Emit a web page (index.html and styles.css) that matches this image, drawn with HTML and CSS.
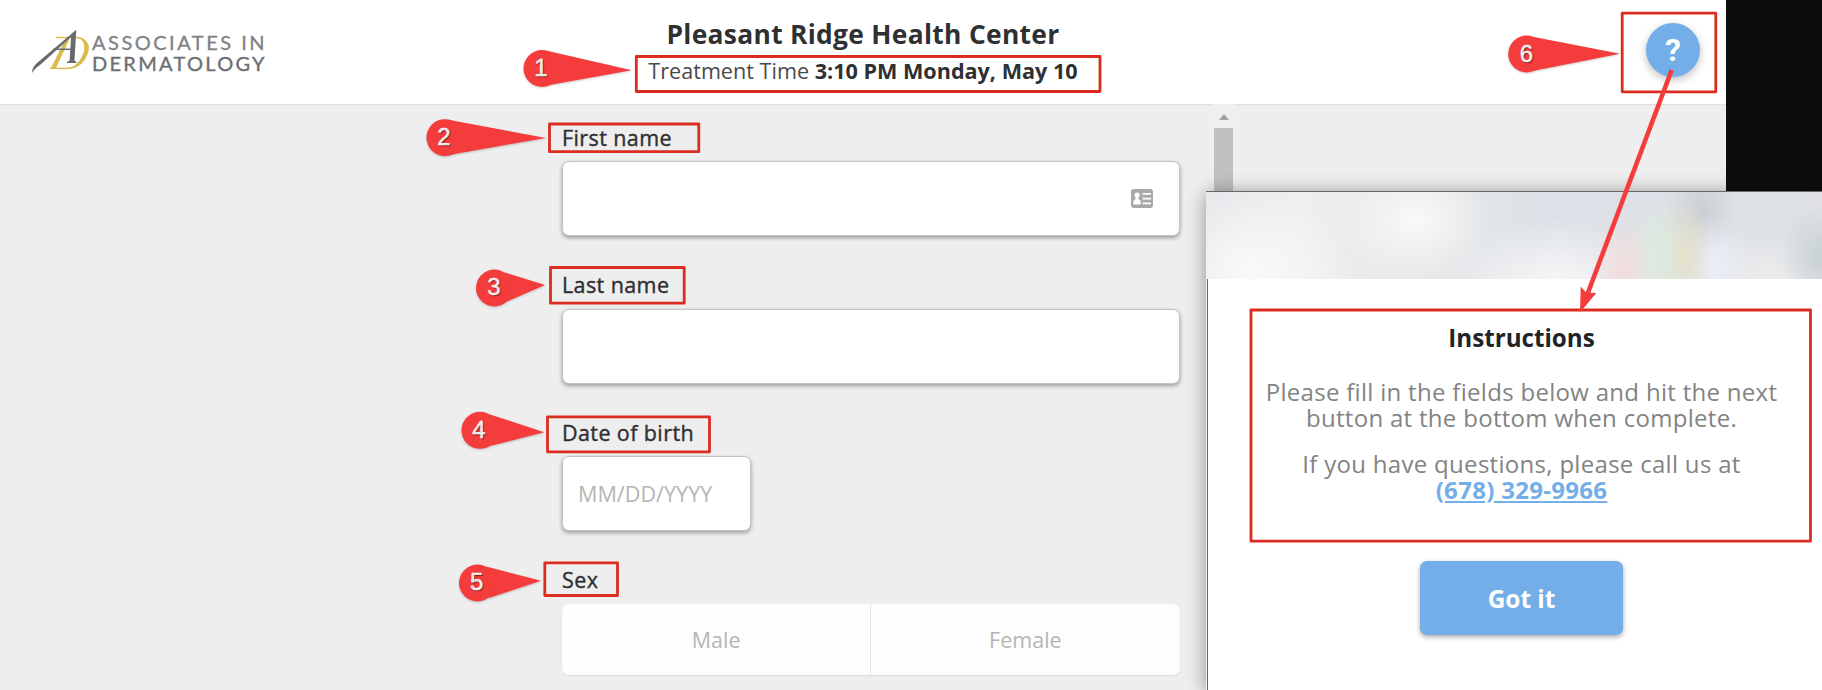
FILE: index.html
```html
<!DOCTYPE html>
<html lang="en">
<head>
    <meta charset="UTF-8">
    <meta name="viewport" content="width=device-width, initial-scale=1.0">
    <title>Pleasant Ridge Health Center - Check In</title>
    <link rel="stylesheet" href="styles.css">
</head>
<body>
    <div class="page">
        <header class="header">
            <div class="logo">
                <svg class="logo-mark" width="60" height="46" viewBox="0 0 60 46">
                    <path d="M25 8.5 H44 C54 8.5 58 15 56 23 C53 34 45 39.5 34 39.5 L19 39.3" fill="none" stroke="#d9bb4e" stroke-width="1.6"/>
                    <path d="M47 8 C58 10 60 19 56 26 C53 34 47 38 39 40 C47 35 51 29 53 22 C54 15 52 11 47 8 Z" fill="#d9bb4e"/>
                    <path d="M35 9 L39 9 L25 39 L20 39 Z" fill="#d9bb4e"/>
                    <path d="M1.3 44 C1 39 3 37 6 34 L44.5 1.5 L44.5 4 L9 36 C5 39 3.5 40 1.3 44 Z" fill="#6a6b70"/>
                    <path d="M45.3 1 L43.5 31 Q43.3 32.5 45.5 32.8 V34 H36 V32.8 Q38.5 32.5 38.6 31 L40.3 5 Z" fill="#6a6b70"/>
                    <path d="M22 20.3 H40" stroke="#6a6b70" stroke-width="1.5"/>
                </svg>
                <div class="logo-text">
                    <span class="logo-top">ASSOCIATES IN</span>
                    <span class="logo-bottom">DERMATOLOGY</span>
                </div>
            </div>
            <div class="heading">
                <h1>Pleasant Ridge Health Center</h1>
                <p>Treatment Time <b>3:10 PM Monday, May 10</b></p>
            </div>
            <button class="help-btn">?</button>
        </header>
        <main class="content">
            <form class="form">
                <div class="field">
                    <label for="first">First name</label>
                    <div class="input-box">
                        <input id="first" type="text">
                        <svg width="22" height="19" viewBox="0 0 22 19">
                            <rect width="22" height="19" rx="3" fill="#a9a9a9"/>
                            <circle cx="6" cy="6.1" r="2.6" fill="#fff"/>
                            <path d="M2.3 15.5 V13 Q2.3 10.8 4.4 10.3 L4.8 8 H7.2 L7.6 10.3 Q9.7 10.8 9.7 13 V15.5 Z" fill="#fff"/>
                            <path d="M11.5 4.8 H20 M11.5 9.6 H20 M11.5 14.4 H20" stroke="#fff" stroke-width="1.8"/>
                        </svg>
                    </div>
                </div>
                <div class="field">
                    <label for="last">Last name</label>
                    <div class="input-box">
                        <input id="last" type="text">
                    </div>
                </div>
                <div class="field">
                    <label for="dob">Date of birth</label>
                    <div class="input-box small">
                        <input id="dob" type="text" placeholder="MM/DD/YYYY">
                    </div>
                </div>
                <div class="field">
                    <label>Sex</label>
                    <div class="toggle">
                        <button type="button">Male</button>
                        <button type="button">Female</button>
                    </div>
                </div>
            </form>
            <div class="scrollbar">
                <div class="scroll-up"></div>
                <div class="scroll-thumb"></div>
            </div>
        </main>
    </div>

    <div class="popup">
        <div class="popup-bar"></div>
        <div class="popup-body">
            <h2>Instructions</h2>
            <p>Please fill in the fields below and hit the next<br>button at the bottom when complete.</p>
            <p>If you have questions, please call us at<br><a href="tel:6783299966">(678) 329-9966</a></p>
            <button class="got-it">Got it</button>
        </div>
    </div>

    <!-- callout boxes, numbered pins and arrow -->
    <svg class="callouts" width="1822" height="690" viewBox="0 0 1822 690">
        <g class="boxes">
            <rect x="636.3" y="56.5" width="463.7" height="35"/>
            <rect x="549.5" y="124" width="149.3" height="27.7"/>
            <rect x="550.5" y="267.5" width="133.7" height="35.7"/>
            <rect x="547.5" y="416.8" width="162" height="35"/>
            <rect x="544.8" y="562.8" width="72.7" height="32.7"/>
            <rect x="1622.2" y="13.2" width="93.6" height="78.6"/>
            <rect x="1251" y="310" width="559.5" height="231.2"/>
        </g>
        <g class="pins">
            <circle cx="542" cy="68.5" r="18.5"/>
            <path d="M548 51 L631.7 70.3 L551 84.8 Z"/>
            <circle cx="445" cy="137.7" r="18.5"/>
            <path d="M452 120.6 L546 138 L452 154.4 Z"/>
            <circle cx="494.5" cy="288" r="18.5"/>
            <path d="M505 272.5 L545 285 L507 301.5 Z"/>
            <circle cx="480" cy="430.3" r="18.5"/>
            <path d="M490 414.5 L544.3 432.3 L490 446 Z"/>
            <circle cx="477.5" cy="583" r="18.5"/>
            <path d="M486 566.5 L541 580.7 L489 598 Z"/>
            <circle cx="1526.7" cy="54" r="18.5"/>
            <path d="M1534 37 L1620 53.7 L1534 70.8 Z"/>
        </g>
        <g class="pin-labels">
            <text x="541" y="76">1</text>
            <text x="444" y="144.7">2</text>
            <text x="494" y="295">3</text>
            <text x="479" y="438">4</text>
            <text x="476.7" y="590">5</text>
            <text x="1526.5" y="61.7">6</text>
        </g>
        <g class="arrow">
            <path d="M1671.7 70 L1587.5 294" fill="none" stroke="#f43c3c" stroke-width="4.6"/>
            <path d="M1580 312.5 L1580.7 286.5 L1586 292.5 L1596.3 293 Z" fill="#f43c3c"/>
        </g>
    </svg>
</body>
</html>
```

FILE: styles.css
```css
* {
    box-sizing: border-box;
}
body {
    margin: 0;
    height: 690px;
    overflow: hidden;
    background-color: #0d0d0d;
    font-family: "Open Sans", sans-serif;
    color: #2f3032;
}
h1, h2, p {
    margin: 0;
}
button, input {
    font-family: inherit;
    border: none;
    padding: 0;
}
.page {
    width: 1726px;
    height: 690px;
    background-color: #eeeeee;
}
.header {
    display: grid;
    grid-template-columns: 1fr auto 1fr;
    height: 104px;
    padding: 0 26px 0 31px;
    background-color: #fff;
    box-shadow: 0 1px 1px rgba(0, 0, 0, 0.06);
}
.logo {
    display: flex;
    padding-top: 29px;
}
.logo-text {
    display: flex;
    flex-direction: column;
    font-family: Lato, sans-serif;
    font-size: 20px;
    line-height: 20.5px;
    padding-top: 3px;
    margin-left: 1px;
    white-space: nowrap;
}
.logo-top {
    color: #808185;
    letter-spacing: 2.5px;
    -webkit-text-stroke: 0.3px #808185;
}
.logo-bottom {
    color: #6f7074;
    letter-spacing: 2.3px;
    -webkit-text-stroke: 0.4px #6f7074;
}
.heading {
    margin-right: 5px;
    text-align: center;
    white-space: nowrap;
}
.heading h1 {
    font-size: 26.4px;
    line-height: 34px;
    font-weight: 700;
    letter-spacing: 0.3px;
    padding-top: 17px;
}
.heading p {
    font-size: 21.6px;
    line-height: 30px;
    padding-top: 4.5px;
    color: #4a4a4a;
}
.heading b {
    color: #2f3032;
}
.help-btn {
    justify-self: end;
    width: 54px;
    height: 54px;
    margin-top: 23px;
    border-radius: 50%;
    background-color: #74aee8;
    color: #fff;
    font-family: Roboto, sans-serif;
    font-size: 32px;
    font-weight: 700;
    box-shadow: 0 3px 8px rgba(0, 0, 0, 0.25);
}
.content {
    display: flex;
    padding-left: 562px;
}
.form {
    width: 617.5px;
    padding-top: 19px;
}
.field {
    height: 147.4px;
}
.field label {
    display: block;
    height: 38.4px;
    font-size: 21.5px;
    line-height: 29px;
    letter-spacing: 0.4px;
    -webkit-text-stroke: 0.4px #2f3032;
}
.input-box {
    display: flex;
    align-items: center;
    height: 75px;
    padding: 0 26px 0 15px;
    border: 1px solid #c4c4c4;
    border-radius: 7px;
    background-color: #fff;
    box-shadow: 0 2px 4px rgba(0, 0, 0, 0.35);
}
.input-box.small {
    width: 189px;
    padding: 0 10px 0 15px;
}
.input-box input {
    flex: 1;
    min-width: 0;
    background: none;
    font-size: 21.6px;
}
.input-box input::placeholder {
    color: #b5b5b5;
}
.toggle {
    display: flex;
    height: 71px;
    border-radius: 7px;
    background-color: #fdfdfd;
    box-shadow: 0 1px 2px rgba(0, 0, 0, 0.08);
}
.toggle button {
    flex: 1;
    background: none;
    color: #b5b5b5;
    font-size: 21.5px;
}
.toggle button + button {
    border-left: 1px solid #e6e6e6;
}
.scrollbar {
    width: 21px;
    margin-left: 33.5px;
    padding: 10px 1px 0;
    height: 586px;
    background-color: #efefef;
}
.scroll-up {
    width: 0;
    margin: 0 auto 8px;
    border: 5px solid transparent;
    border-top: none;
    border-bottom: 6px solid #a3a3a3;
}
.scroll-thumb {
    height: 300px;
    background-color: #c1c1c1;
}
.popup {
    position: absolute;
    left: 1206px;
    top: 191px;
    width: 616px;
    height: 499px;
    box-shadow: 0 2px 18px rgba(0, 0, 0, 0.4);
}
.popup-bar {
    height: 88px;
    border-top: 1px solid #66686b;
    background:
        radial-gradient(ellipse 75px 60px at 210px 28px, #f8f9f9, rgba(248, 249, 249, 0)),
        radial-gradient(ellipse 34px 60px at 417px 80px, #f2dcdc, rgba(242, 220, 220, 0)),
        radial-gradient(ellipse 34px 60px at 447px 65px, #dcecdf, rgba(220, 236, 223, 0)),
        radial-gradient(ellipse 30px 60px at 476px 65px, #e5e1c8, rgba(229, 225, 200, 0)),
        radial-gradient(ellipse 34px 50px at 510px 72px, #eaeef7, rgba(234, 238, 247, 0)),
        radial-gradient(ellipse 36px 50px at 496px 20px, #cbced2, rgba(203, 206, 210, 0)),
        radial-gradient(ellipse 40px 50px at 614px 64px, #c8d1d5, rgba(200, 209, 213, 0)),
        radial-gradient(ellipse 100px 80px at 45px 80px, #fafafa, rgba(250, 250, 250, 0)),
        radial-gradient(ellipse 110px 70px at 350px 95px, #f8f8f8, rgba(248, 248, 248, 0)),
        radial-gradient(ellipse 90px 50px at 560px 90px, #ededed, rgba(237, 237, 237, 0)),
        linear-gradient(90deg, #e7e8eb, #eeefef 15%, #e4e6e8 40%, #dde1e7 55%, #dde1e7 75%, #dfe1e4);
}
.popup-body {
    height: 411px;
    margin-left: 1px;
    padding: 42px 0 0 13px;
    border-left: 1px solid #66686b;
    background-color: #fff;
    text-align: center;
}
.popup-body h2 {
    font-size: 24.2px;
    line-height: 34px;
    color: #222326;
}
.popup-body p {
    margin-top: 24px;
    font-size: 24px;
    line-height: 25.5px;
    letter-spacing: 0.3px;
    color: #838383;
    white-space: nowrap;
}
.popup-body p + p {
    margin-top: 21px;
}
.popup-body a {
    color: #74aee8;
    font-weight: 700;
}
.got-it {
    width: 203px;
    height: 74px;
    margin-top: 58.5px;
    padding-top: 1px;
    border-radius: 7px;
    background-color: #74aee8;
    color: #fff;
    font-size: 24.4px;
    font-weight: 700;
    box-shadow: 0 2px 5px rgba(0, 0, 0, 0.35);
}
.callouts {
    position: absolute;
    left: 0;
    top: 0;
}
.boxes rect {
    fill: none;
    stroke: #dc2c20;
    stroke-width: 2.8;
    stroke-linejoin: round;
}
.pins {
    fill: #f43c3c;
    filter: drop-shadow(0 1px 1px rgba(0, 0, 0, 0.2));
}
.pin-labels {
    font-family: "Liberation Sans", Arial, sans-serif;
    font-size: 24px;
    fill: #fff;
    stroke: #fff;
    stroke-width: 0.4px;
    text-anchor: middle;
    text-shadow: 1px 1px 1px rgba(0, 0, 0, 0.4);
}
```
